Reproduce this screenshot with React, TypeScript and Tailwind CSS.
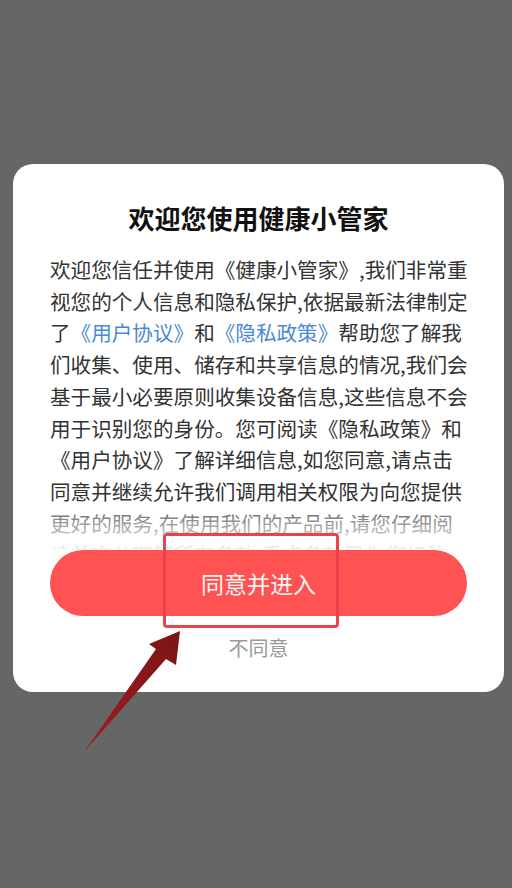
import React from "react";

const lines: React.ReactNode[] = [
  "欢迎您信任并使用《健康小管家》,我们非常重",
  "视您的个人信息和隐私保护,依据最新法律制定",
  <>
    了<span className="text-[#4a89d4]">《用户协议》</span>和
    <span className="text-[#4a89d4]">《隐私政策》</span>帮助您了解我
  </>,
  "们收集、使用、储存和共享信息的情况,我们会",
  "基于最小必要原则收集设备信息,这些信息不会",
  "用于识别您的身份。您可阅读《隐私政策》和",
  "《用户协议》了解详细信息,如您同意,请点击",
  "同意并继续允许我们调用相关权限为向您提供",
  "更好的服务,在使用我们的产品前,请您仔细阅",
  "读并充分理解所有条款,重点条款已为您标注",
  "并请您确认已充分理解后再开始使用本产品。",
];

function Arrow() {
  return (
    <svg
      className="absolute left-[80px] top-[625px] w-[110px] h-[132px] pointer-events-none"
      viewBox="0 0 110 132"
    >
      <defs>
        <linearGradient id="arrowFill" x1="0" y1="1" x2="1" y2="0">
          <stop offset="0" stopColor="#a01e22" />
          <stop offset="1" stopColor="#7a1416" />
        </linearGradient>
      </defs>
      <polygon
        points="100,6 69,19 76,24 4,127 86,34 96,40"
        fill="url(#arrowFill)"
      />
    </svg>
  );
}

export default function App() {
  return (
    <div className="relative h-[888px] w-full overflow-hidden bg-[#666666] pt-[164px] font-['Noto_Sans_CJK_SC',sans-serif]">
      <div className="ml-[13px] w-[491px] rounded-[20px] bg-white px-[37px] pt-[36px] pb-[30px]">
        <h1 className="text-center text-[26px] leading-[36px] font-bold text-[#111111]">
          欢迎您使用健康小管家
        </h1>

        <div className="relative mt-[18px] h-[296px] overflow-hidden text-[20.6px] leading-[31.7px] text-[#333333]">
          {lines.map((line, i) => (
            <div key={i} className="whitespace-nowrap">
              {line}
            </div>
          ))}
          <div className="absolute inset-x-0 bottom-0 h-[50px] bg-gradient-to-b from-white/0 via-white/55 to-white/[0.93]" />
        </div>

        <button className="flex h-[66px] w-full items-center justify-center rounded-full bg-[#ff5252] text-[23px] text-[#f7f7f7]">
          同意并进入
        </button>

        <div className="mt-[18px] text-center text-[20px] leading-[28px] text-[#999999]">
          不同意
        </div>
      </div>

      {/* annotation */}
      <div className="absolute left-[163px] top-[533px] h-[95px] w-[176px] rounded-[4px] border-[3px] border-[#e8424a] pointer-events-none" />
      <Arrow />
    </div>
  );
}
